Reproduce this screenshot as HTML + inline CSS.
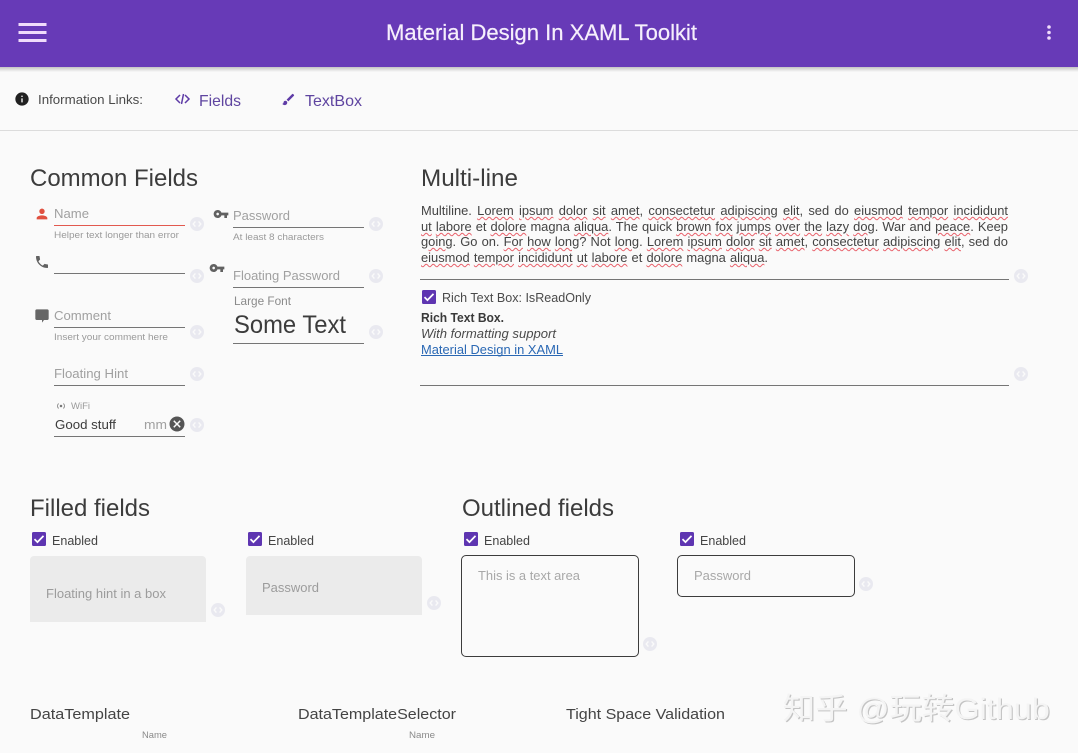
<!DOCTYPE html>
<html><head><meta charset="utf-8"><style>
html,body{margin:0;padding:0;background:#fafafa;width:1078px;height:753px;overflow:hidden}
svg{position:absolute;left:0;top:0;font-family:"Liberation Sans","Noto Sans CJK SC",sans-serif}
.l{position:absolute;left:421px;width:587px;height:16px;font:12.9px/16px "Liberation Sans",sans-serif;color:#444;white-space:normal;text-align:justify;text-align-last:justify}
.l u{text-decoration:underline wavy #e8606a 1px;text-underline-offset:1px}
</style></head><body>
<svg width="1078" height="753" viewBox="0 0 1078 753">
<defs>
<linearGradient id="sh" x1="0" y1="0" x2="0" y2="1"><stop offset="0" stop-color="#000" stop-opacity=".22"/><stop offset="1" stop-color="#000" stop-opacity="0"/></linearGradient>
<symbol id="hint" viewBox="0 0 14 14"><circle cx="7" cy="7" r="7" fill="#e9e9f0"/><path d="M5.4 4.400L3.200 7l2.200 2.600M8.600 4.400L10.800 7l-2.200 2.600" fill="none" stroke="#fafafa" stroke-width="1.400"/></symbol>
<symbol id="cb" viewBox="3 3 18 18"><rect x="3" y="3" width="18" height="18" rx="2" fill="#5e35b1"/><path d="M6.200 12.200l3.800 3.800 7.800-8" fill="none" stroke="#fff" stroke-width="2.200"/></symbol>
<symbol id="key" viewBox="0 0 24 24"><path d="M12.65 10C11.83 7.67 9.61 6 7 6c-3.31 0-6 2.69-6 6s2.69 6 6 6c2.61 0 4.83-1.67 5.65-4H17v4h4v-4h2v-4H12.65zM7 14c-1.1 0-2-.9-2-2s.9-2 2-2 2 .9 2 2-.9 2-2 2z"/></symbol>
</defs>
<rect width="1078" height="753" fill="#fafafa"/>
<rect y="67" width="1078" height="5" fill="url(#sh)"/>
<rect width="1078" height="67" fill="#673ab7"/>
<g fill="#f0dcfb"><rect x="18.500" y="23" width="28" height="3"/><rect x="18.500" y="31" width="28" height="3"/><rect x="18.500" y="39" width="28" height="3"/>
<circle cx="1049" cy="27" r="1.800"/><circle cx="1049" cy="32.500" r="1.800"/><circle cx="1049" cy="38" r="1.800"/></g>
<text x="386" y="40" font-size="22" fill="#f6effc" stroke="#f6effc" stroke-width=".2" textLength="311" lengthAdjust="spacingAndGlyphs">Material Design In XAML Toolkit</text>
<rect y="130" width="1078" height="1" fill="#dcdcdc"/>

<svg x="14" y="91" width="16" height="16" viewBox="0 0 24 24" fill="#212121"><path d="M12 2C6.48 2 2 6.48 2 12s4.48 10 10 10 10-4.48 10-10S17.52 2 12 2zm1 15h-2v-6h2v6zm0-8h-2V7h2v2z"/></svg>
<text x="38" y="104" font-size="12.500" fill="#4a4a4a" textLength="105" lengthAdjust="spacingAndGlyphs">Information Links:</text>
<g fill="none" stroke="#5e3ba6" stroke-width="1.500"><path d="M180 95l-4 4 4 4M185 95l4 4-4 4M183.500 94l-2 10"/></g>
<text x="199" y="106" font-size="16" fill="#5f45a0" textLength="42" lengthAdjust="spacingAndGlyphs">Fields</text>
<svg x="281" y="92" width="15" height="15" viewBox="0 0 24 24" fill="#5e3ba6"><path d="M7 14c-1.660 0-3 1.340-3 3 0 1.310-1.160 2-2 2 .92 1.220 2.490 2 4 2 2.210 0 4-1.790 4-4 0-1.660-1.340-3-3-3zm13.710-9.370l-1.340-1.340c-.39-.39-1.020-.39-1.410 0L9 12.250 11.750 15l8.960-8.960c.39-.39.39-1.030 0-1.410z"/></svg>
<text x="305" y="106" font-size="16" fill="#5f45a0" textLength="57" lengthAdjust="spacingAndGlyphs">TextBox</text>

<g fill="#3c3c3c" font-size="24">
<text x="30" y="186" textLength="168" lengthAdjust="spacingAndGlyphs">Common Fields</text>
<text x="421" y="186" textLength="97" lengthAdjust="spacingAndGlyphs">Multi-line</text>
<text x="30" y="516" textLength="120" lengthAdjust="spacingAndGlyphs">Filled fields</text>
<text x="462" y="516" textLength="152" lengthAdjust="spacingAndGlyphs">Outlined fields</text>
</g>

<!-- common fields -->
<svg x="34" y="206" width="16" height="16" viewBox="0 0 24 24" fill="#e0503f"><path d="M12 12c2.210 0 4-1.790 4-4s-1.790-4-4-4-4 1.790-4 4 1.790 4 4 4zm0 2c-2.670 0-8 1.340-8 4v2h16v-2c0-2.660-5.330-4-8-4z"/></svg>
<svg x="34" y="254" width="16" height="16" viewBox="0 0 24 24" fill="#616161"><path d="M6.620 10.790c1.440 2.830 3.760 5.140 6.590 6.590l2.200-2.200c.27-.27.67-.36 1.020-.24 1.120.37 2.330.57 3.570.57.55 0 1 .45 1 1V20c0 .55-.45 1-1 1-9.390 0-17-7.610-17-17 0-.55.45-1 1-1h3.500c.55 0 1 .45 1 1 0 1.250.2 2.450.57 3.570.11.35.03.74-.25 1.020l-2.200 2.200z"/></svg>
<svg x="34" y="308" width="16" height="16" viewBox="0 0 24 24" fill="#666"><path d="M2 4c0-1.100.9-2 2-2h16c1.100 0 2 .9 2 2v12c0 1.100-.9 2-2 2h-5l-3 4v-4H4c-1.100 0-2-.9-2-2z"/></svg>
<use href="#key" x="213" y="206" width="16" height="16" fill="#616161"/>
<use href="#key" x="209" y="260" width="16" height="16" fill="#616161"/>
<g fill="none" stroke="#777" stroke-width=".9"><path d="M58.500 403.500a4 4 0 0 0 0 5M63.500 403.500a4 4 0 0 1 0 5"/><circle cx="61" cy="406" r=".8" fill="#777"/></g>

<g fill="#757575">
<rect x="54" y="273" width="131" height="1"/><rect x="54" y="327" width="131" height="1"/><rect x="54" y="385" width="131" height="1"/><rect x="54" y="436" width="131" height="1"/>
<rect x="233" y="227" width="131" height="1"/><rect x="233" y="287" width="131" height="1"/><rect x="233" y="343" width="131" height="1"/>
<rect x="420" y="279" width="589" height="1"/><rect x="420" y="385" width="589" height="1"/>
</g>
<rect x="54" y="225" width="131" height="1" fill="#e2594f"/>

<g fill="#a0a0a0" font-size="13">
<text x="54" y="218" textLength="35" lengthAdjust="spacingAndGlyphs">Name</text>
<text x="233" y="220" textLength="57" lengthAdjust="spacingAndGlyphs">Password</text>
<text x="233" y="280" textLength="107" lengthAdjust="spacingAndGlyphs">Floating Password</text>
<text x="54" y="320" textLength="57" lengthAdjust="spacingAndGlyphs">Comment</text>
<text x="54" y="378" textLength="74" lengthAdjust="spacingAndGlyphs">Floating Hint</text>
<text x="144" y="429" textLength="23" lengthAdjust="spacingAndGlyphs">mm</text>
</g>
<g fill="#9a9a9a" font-size="9.500">
<text x="54" y="238" textLength="125" lengthAdjust="spacingAndGlyphs">Helper text longer than error</text>
<text x="233" y="240" textLength="91" lengthAdjust="spacingAndGlyphs">At least 8 characters</text>
<text x="54" y="340" textLength="114" lengthAdjust="spacingAndGlyphs">Insert your comment here</text>
<text x="71" y="409" textLength="19" lengthAdjust="spacingAndGlyphs">WiFi</text>
</g>
<text x="234" y="305" font-size="12" fill="#8a8a8a" textLength="57" lengthAdjust="spacingAndGlyphs">Large Font</text>
<text x="234" y="333" font-size="25" fill="#3c3c3c" textLength="112" lengthAdjust="spacingAndGlyphs">Some Text</text>
<text x="55" y="429" font-size="13" fill="#3c3c3c" textLength="61" lengthAdjust="spacingAndGlyphs">Good stuff</text>
<svg x="168" y="415" width="18" height="18" viewBox="0 0 24 24" fill="#555"><path d="M12 2C6.470 2 2 6.470 2 12s4.470 10 10 10 10-4.470 10-10S17.530 2 12 2zm5 13.590L15.590 17 12 13.410 8.410 17 7 15.590 10.590 12 7 8.410 8.410 7 12 10.590 15.590 7 17 8.410 13.410 12 17 15.590z"/></svg>

<!-- hints -->
<use href="#hint" x="190" y="217" width="14" height="14"/><use href="#hint" x="190" y="269" width="14" height="14"/>
<use href="#hint" x="190" y="325" width="14" height="14"/><use href="#hint" x="190" y="367" width="14" height="14"/>
<use href="#hint" x="190" y="418" width="14" height="14"/><use href="#hint" x="369" y="217" width="14" height="14"/>
<use href="#hint" x="369" y="269" width="14" height="14"/><use href="#hint" x="369" y="325" width="14" height="14"/>
<use href="#hint" x="1014" y="269" width="14" height="14"/><use href="#hint" x="1014" y="367" width="14" height="14"/>
<use href="#hint" x="211" y="603" width="14" height="14"/><use href="#hint" x="427" y="596" width="14" height="14"/>
<use href="#hint" x="643" y="637" width="14" height="14"/><use href="#hint" x="859" y="577" width="14" height="14"/>

<!-- rich text -->
<use href="#cb" x="422" y="290" width="14" height="14"/>
<text x="442" y="302" font-size="12.500" fill="#4a4a4a" textLength="149" lengthAdjust="spacingAndGlyphs">Rich Text Box: IsReadOnly</text>
<text x="421" y="322" font-size="12.500" font-weight="bold" fill="#3a3a3a" textLength="83" lengthAdjust="spacingAndGlyphs">Rich Text Box.</text>
<text x="421" y="338" font-size="12.500" font-style="italic" fill="#4a4a4a" textLength="135" lengthAdjust="spacingAndGlyphs">With formatting support</text>
<text x="421" y="354" font-size="12.500" fill="#2a68b4" textLength="142" lengthAdjust="spacingAndGlyphs">Material Design in XAML</text>
<rect x="421" y="355" width="142" height="1" fill="#2a68b4"/>

<!-- filled / outlined -->
<use href="#cb" x="32" y="532" width="14" height="14"/><use href="#cb" x="248" y="532" width="14" height="14"/>
<use href="#cb" x="464" y="532" width="14" height="14"/><use href="#cb" x="680" y="532" width="14" height="14"/>
<g fill="#444" font-size="13">
<text x="52" y="545" textLength="46" lengthAdjust="spacingAndGlyphs">Enabled</text>
<text x="268" y="545" textLength="46" lengthAdjust="spacingAndGlyphs">Enabled</text>
<text x="484" y="545" textLength="46" lengthAdjust="spacingAndGlyphs">Enabled</text>
<text x="700" y="545" textLength="46" lengthAdjust="spacingAndGlyphs">Enabled</text>
</g>
<path d="M30 560a4 4 0 0 1 4-4h168a4 4 0 0 1 4 4v62H30z" fill="#ebebeb"/>
<path d="M246 560a4 4 0 0 1 4-4h168a4 4 0 0 1 4 4v55H246z" fill="#ebebeb"/>
<rect x="461.500" y="555.500" width="177" height="101" rx="4.500" fill="none" stroke="#3c3c3c"/>
<rect x="677.500" y="555.500" width="177" height="41" rx="4.500" fill="none" stroke="#3c3c3c"/>
<g fill="#9c9c9c" font-size="13">
<text x="46" y="598" textLength="120" lengthAdjust="spacingAndGlyphs">Floating hint in a box</text>
<text x="262" y="592" textLength="57" lengthAdjust="spacingAndGlyphs">Password</text>
<text x="478" y="580" textLength="102" lengthAdjust="spacingAndGlyphs" fill="#a8a8a8">This is a text area</text>
<text x="694" y="580" textLength="57" lengthAdjust="spacingAndGlyphs" fill="#a8a8a8">Password</text>
</g>

<!-- bottom -->
<g fill="#444" font-size="15">
<text x="30" y="719" textLength="100" lengthAdjust="spacingAndGlyphs">DataTemplate</text>
<text x="298" y="719" textLength="158" lengthAdjust="spacingAndGlyphs">DataTemplateSelector</text>
<text x="566" y="719" textLength="159" lengthAdjust="spacingAndGlyphs">Tight Space Validation</text>
</g>
<g fill="#8a8a8a" font-size="9.500">
<text x="142" y="738" textLength="25" lengthAdjust="spacingAndGlyphs">Name</text>
<text x="409" y="738" textLength="26" lengthAdjust="spacingAndGlyphs">Name</text>
</g>

<!-- watermark -->
<g font-size="30" font-family="'Liberation Sans','Noto Sans CJK SC',sans-serif">
<text x="784" y="720" fill="#c4c4c4" textLength="267" lengthAdjust="spacingAndGlyphs">知乎 @玩转Github</text>
<text x="782.800" y="719" fill="#f4f4f4" textLength="267" lengthAdjust="spacingAndGlyphs">知乎 @玩转Github</text>
</g>
</svg>

<div class="l" style="top:203px">Multiline. <u>Lorem</u> <u>ipsum</u> <u>dolor</u> <u>sit</u> <u>amet</u>, <u>consectetur</u> <u>adipiscing</u> <u>elit</u>, sed do <u>eiusmod</u> <u>tempor</u> <u>incididunt</u></div>
<div class="l" style="top:219px"><u>ut</u> <u>labore</u> et <u>dolore</u> magna <u>aliqua</u>. The quick <u>brown</u> <u>fox</u> <u>jumps</u> <u>over</u> <u>the</u> <u>lazy</u> <u>dog</u>. War and <u>peace</u>. Keep</div>
<div class="l" style="top:234px"><u>going</u>. Go on. <u>For</u> <u>how</u> <u>long</u>? Not <u>long</u>. <u>Lorem</u> <u>ipsum</u> <u>dolor</u> <u>sit</u> <u>amet</u>, <u>consectetur</u> <u>adipiscing</u> <u>elit</u>, sed do</div>
<div class="l" style="top:250px;width:347px"><u>eiusmod</u> <u>tempor</u> <u>incididunt</u> <u>ut</u> <u>labore</u> et <u>dolore</u> magna <u>aliqua</u>.</div>
</body></html>
